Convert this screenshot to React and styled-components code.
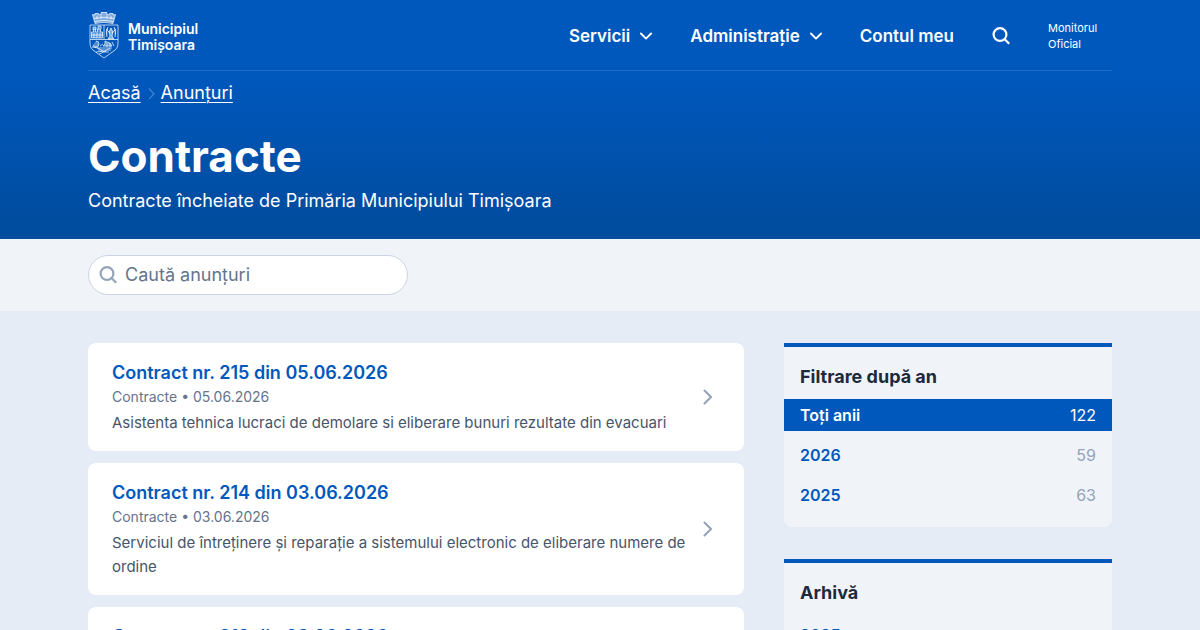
import styled, { createGlobalStyle } from 'styled-components';

const GlobalStyle = createGlobalStyle`
    *, *::before, *::after {
        box-sizing: border-box;
    }
    body {
        margin: 0;
        background-color: #e5ecf6;
        color: #1e293b;
        font-family: Inter, "Liberation Sans", sans-serif;
        font-size: 18px;
        line-height: 28px;
    }
    h1, h2, h3, p, ul, ol {
        margin: 0;
        padding: 0;
    }
    ul, ol {
        list-style: none;
    }
    a {
        color: inherit;
        text-decoration: none;
    }
    svg {
        flex-shrink: 0;
    }
`;
const Container = styled.div`
    max-width: 1088px;
    margin: 0 auto;
    padding: 0 32px;
`;
const Header = styled.header`
    background-image: linear-gradient(#0058bd 30%, #004b9c);
    color: #fff;
    padding-bottom: 24px;
`;
const TopBar = styled.div`
    display: flex;
    align-items: center;
    justify-content: space-between;
    height: 71px;
    border-bottom: 1px solid #1f6bc2;
`;
const Brand = styled.a`
    display: flex;
    align-items: center;
    gap: 8px;
    font-size: 14px;
    line-height: 16px;
    font-weight: 600;
`;
const BrandName = styled.span`
    width: 80px;
    padding-top: 4px;
`;
const Nav = styled.nav`
    display: flex;
    align-items: center;
    gap: 38px;
    padding: 2px 16px 0 0;
    font-size: 17px;
    font-weight: 600;
`;
const NavButton = styled.button`
    display: flex;
    align-items: center;
    gap: 10px;
    padding: 0;
    border: 0;
    background: none;
    color: #fff;
    font: inherit;
    cursor: pointer;
`;
const SmallLink = styled.a`
    width: 48px;
    font-size: 11px;
    line-height: 16px;
    font-weight: 400;
`;
const Breadcrumb = styled.ol`
    display: flex;
    align-items: center;
    gap: 6px;
    padding-top: 8px;
    a {
        text-decoration: underline;
        text-decoration-thickness: 1px;
        text-underline-offset: 3px;
    }
    li {
        display: flex;
        align-items: center;
        gap: 6px;
    }
`;
const Title = styled.h1`
    margin-top: 25px;
    font-size: 44px;
    line-height: 48px;
    font-weight: 700;
`;
const Subtitle = styled.p`
    margin-top: 7px;
`;
const SearchBar = styled.div`
    background-color: #f0f4f9;
    padding: 16px 0;
`;
const SearchForm = styled.form`
    display: flex;
    align-items: center;
    gap: 8px;
    width: 320px;
    max-width: 100%;
    height: 40px;
    padding: 0 16px 0 10px;
    border: 1px solid #cbd5e1;
    border-radius: 20px;
    background-color: #fff;
    color: #94a3b8;
`;
const SearchInput = styled.input`
    flex: 1;
    min-width: 0;
    padding: 0;
    border: 0;
    outline: 0;
    background: none;
    color: #1e293b;
    font: inherit;
    &::placeholder {
        color: #64748b;
        opacity: 1;
    }
`;
const Main = styled.main`
    display: grid;
    grid-template-columns: minmax(0, 2fr) minmax(0, 1fr);
    gap: 40px;
    padding: 32px 0;
`;
const List = styled.ul`
    display: flex;
    flex-direction: column;
    gap: 12px;
`;
const Card = styled.a`
    display: flex;
    align-items: center;
    justify-content: space-between;
    gap: 8px;
    padding: 16px 24px;
    border-radius: 8px;
    background-color: #fff;
    color: #94a3b8;
`;
const CardTitle = styled.h2`
    color: #0058bd;
    font-size: 18px;
    line-height: 28px;
    font-weight: 600;
`;
const Meta = styled.p`
    color: #64748b;
    font-size: 14px;
    line-height: 20px;
`;
const Description = styled.p`
    margin-top: 4px;
    color: #475569;
    font-size: 15px;
    line-height: 24px;
`;
const Sidebar = styled.aside`
    display: flex;
    flex-direction: column;
    gap: 32px;
`;
const Panel = styled.section`
    padding: 16px 0;
    border-top: 4px solid #0058bd;
    border-radius: 0 0 8px 8px;
    background-color: #f0f4f9;
`;
const PanelTitle = styled.h2`
    padding: 0 16px;
    font-size: 18px;
    line-height: 28px;
    font-weight: 700;
`;
const FilterList = styled.ul`
    display: flex;
    flex-direction: column;
    gap: 8px;
    margin-top: ${({ $spaced }) => ($spaced ? '12px' : '8px')};
`;
const FilterLink = styled.a`
    display: flex;
    justify-content: space-between;
    padding: 4px 16px;
    font-size: 16px;
    line-height: 24px;
    font-weight: 600;
    color: ${({ $active }) => ($active ? '#fff' : '#0058bd')};
    background-color: ${({ $active }) => ($active ? '#0058bd' : 'transparent')};
`;
const Count = styled.span`
    font-weight: 400;
    color: ${({ $active }) => ($active ? '#fff' : '#94a3b8')};
`;

const contracts = [
    { nr: 215, date: '05.06.2026', text: 'Asistenta tehnica lucraci de demolare si eliberare bunuri rezultate din evacuari' },
    { nr: 214, date: '03.06.2026', text: 'Serviciul de întreținere și reparație a sistemului electronic de eliberare numere de ordine' },
    { nr: 213, date: '03.06.2026', text: 'Servicii de mentenanță' },
];
const years = [
    { label: 'Toți anii', count: 122, active: true },
    { label: '2026', count: 59 },
    { label: '2025', count: 63 },
];

function ChevronDown() {
    return (
        <svg width="12" height="12" viewBox="0 0 12 12" fill="none" stroke="currentColor" strokeWidth="1.8" strokeLinecap="round" strokeLinejoin="round" aria-hidden="true">
            <path d="M.9 3.500L6 8.600l5.100-5.100" />
        </svg>
    );
}

function Separator() {
    return (
        <svg width="8" height="12" viewBox="0 0 8 12" fill="none" stroke="#4284ce" strokeWidth="1.2" aria-hidden="true">
            <path d="M2 1.500L7 7l-5 5" />
        </svg>
    );
}

function ChevronRight() {
    return (
        <svg width="24" height="24" viewBox="0 0 24 24" fill="none" stroke="currentColor" strokeWidth="2.1" strokeLinecap="round" strokeLinejoin="round" aria-hidden="true">
            <path d="M8.500 5.500L15 12l-6.500 6.500" />
        </svg>
    );
}

function SearchIcon() {
    return (
        <svg width="18" height="18" viewBox="0 0 18 18" fill="none" stroke="currentColor" strokeWidth="2.2" aria-hidden="true">
            <circle cx="8" cy="7.500" r="6.400" />
            <path d="M12.500 12l4.700 4.700" />
        </svg>
    );
}

function Crest() {
    return (
        <svg width="32" height="48" viewBox="0 0 32 48" fill="none" stroke="#fff" strokeWidth="0.7" aria-hidden="true">
            <path d="M7 12.500L4.500 3.500L7 4V2.500h3.500v1.200h2.500V1.500h6V3.700h2.500V2.500H25v1.500l2.500-.5L25 12.500Q16 10 7 12.500z" fill="#fff" fillOpacity="0.5" />
            <path d="M6 7.500Q16 5 26 7.500M7 10.500Q16 8 25 10.500M9 5v3M13 4.500v3M19 4.500v3M23 5v3" />
            <path d="M2 14h28v18q0 6-5 8.500l-9 6.500l-9-6.500q-5-2.500-5-8.500z" />
            <path d="M2 28.500h28M16 14v14" />
            <path d="M3.500 27v-6h2v-3h2v3h2v-3h3v3h2v6zM3 24h12M5 19v-3h3v3M10 18v-3h3v3M6 22v5M9 22v5M12 22v5" fill="#fff" fillOpacity="0.35" />
            <path d="M23 17l-2 4 1 4-2 3h6l-2-3 1-4zM20 16q-3 4-1 10M26 16q3 4 1 10M18 18l4 4M28 18l-4 4" fill="#fff" fillOpacity="0.5" />
            <path d="M8 30q3 0 3 3t-3 3-3-2M9 37h15M10 39h13M17 30v3l-2 2h9l-2-3-3-1zM12 35l3-2M24 31l2 4M19 32v4M22 32v4" fill="#fff" fillOpacity="0.35" />
            <path d="M4 36q6 0 9 3t8 2M8 41l9-1 5-3M11 43l7-3" />
        </svg>
    );
}

export default function App() {
    return (
        <>
            <GlobalStyle />
            <Header>
                <Container>
                    <TopBar>
                        <Brand href="#">
                            <Crest />
                            <BrandName>Municipiul Timișoara</BrandName>
                        </Brand>
                        <Nav>
                            <NavButton type="button">Servicii <ChevronDown /></NavButton>
                            <NavButton type="button">Administrație <ChevronDown /></NavButton>
                            <a href="#">Contul meu</a>
                            <NavButton type="button" aria-label="Caută"><SearchIcon /></NavButton>
                            <SmallLink href="#">Monitorul Oficial</SmallLink>
                        </Nav>
                    </TopBar>
                    <Breadcrumb>
                        <li><a href="#">Acasă</a></li>
                        <li><Separator /><a href="#">Anunțuri</a></li>
                    </Breadcrumb>
                    <Title>Contracte</Title>
                    <Subtitle>Contracte încheiate de Primăria Municipiului Timișoara</Subtitle>
                </Container>
            </Header>
            <SearchBar>
                <Container>
                    <SearchForm role="search">
                        <SearchIcon />
                        <SearchInput type="search" placeholder="Caută anunțuri" aria-label="Caută anunțuri" />
                    </SearchForm>
                </Container>
            </SearchBar>
            <Container>
                <Main>
                    <List>
                        {contracts.map(({ nr, date, text }) => (
                            <li key={nr}>
                                <Card href="#">
                                    <div>
                                        <CardTitle>Contract nr. {nr} din {date}</CardTitle>
                                        <Meta>Contracte • {date}</Meta>
                                        <Description>{text}</Description>
                                    </div>
                                    <ChevronRight />
                                </Card>
                            </li>
                        ))}
                    </List>
                    <Sidebar>
                        <Panel>
                            <PanelTitle>Filtrare după an</PanelTitle>
                            <FilterList>
                                {years.map(({ label, count, active }) => (
                                    <li key={label}>
                                        <FilterLink href="#" $active={active}>
                                            {label} <Count $active={active}>{count}</Count>
                                        </FilterLink>
                                    </li>
                                ))}
                            </FilterList>
                        </Panel>
                        <Panel>
                            <PanelTitle>Arhivă</PanelTitle>
                            <FilterList $spaced>
                                <li><FilterLink href="#">2025</FilterLink></li>
                            </FilterList>
                        </Panel>
                    </Sidebar>
                </Main>
            </Container>
        </>
    );
}
